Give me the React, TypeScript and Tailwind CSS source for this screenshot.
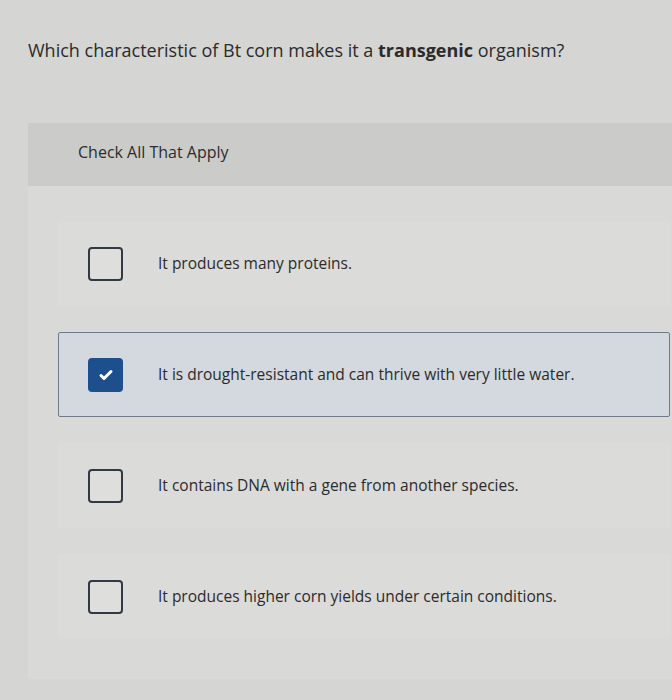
import React from 'react';

const options = [
  { text: 'It produces many proteins.', checked: false },
  { text: 'It is drought-resistant and can thrive with very little water.', checked: true },
  { text: 'It contains DNA with a gene from another species.', checked: false },
  { text: 'It produces higher corn yields under certain conditions.', checked: false },
];

function Checkbox({ checked }: { checked: boolean }) {
  if (checked) {
    return (
      <div className="flex h-[34px] w-[35px] shrink-0 items-center justify-center rounded-[4px] bg-[#1c4f8c]">
        <svg width="16" height="16" viewBox="0 0 16 16" fill="none">
          <path d="M3 8.5l3 3 7-7" stroke="white" strokeWidth="3" strokeLinecap="round" strokeLinejoin="round" />
        </svg>
      </div>
    );
  }
  return <div className="h-[34px] w-[35px] shrink-0 rounded-[4px] border-[2.5px] border-[#2f3a44] bg-[#dededc]" />;
}

export default function App() {
  return (
    <div
      className="min-h-[700px] w-[672px] bg-[#d5d5d3] text-[#2b2b2b]"
      style={{ fontFamily: '"Open Sans", Lato, sans-serif' }}
    >
      <div className="px-[28px] pt-[37px] pb-[60px] text-[18px] leading-[26px]">
        Which characteristic of Bt corn makes it a <span className="font-bold">transgenic</span> organism?
      </div>

      <div className="ml-[28px] bg-[#d9d9d8]">
        <div className="flex h-[63px] items-center bg-[#cbcbca] pb-[6px] pl-[50px] text-[16px]">
          Check All That Apply
        </div>

        <div className="flex flex-col gap-[26px] pt-[35px] pb-[40px] pl-[30px] pr-[2px]">
          {options.map((o) => (
            <div
              key={o.text}
              className={
                'flex h-[85px] items-center gap-[35px] rounded-[2px] pl-[29px] ' +
                (o.checked ? 'border border-[#6f7c88] bg-[#d3d9de]' : 'border border-transparent bg-[#dbdbda]')
              }
            >
              <Checkbox checked={o.checked} />
              <span className="text-[15.5px]">{o.text}</span>
            </div>
          ))}
        </div>
      </div>
    </div>
  );
}
